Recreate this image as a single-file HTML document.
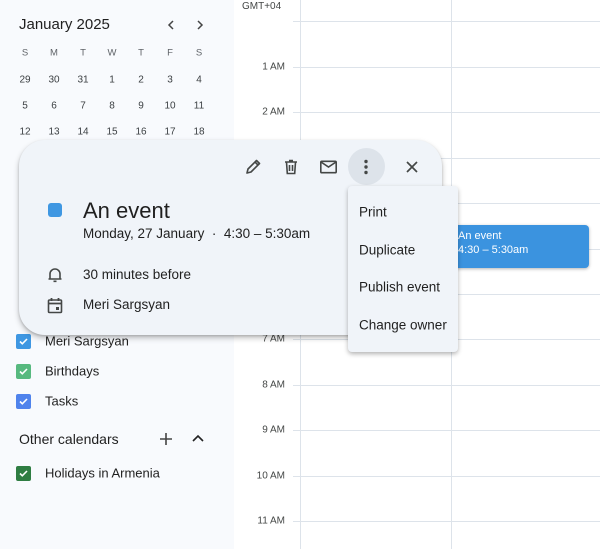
<!DOCTYPE html>
<html><head><style>
*{margin:0;padding:0;box-sizing:border-box}
body{width:600px;height:549px;overflow:hidden;position:relative;background:#fff;font-family:"Liberation Sans",Arial,sans-serif;color:#1f1f1f}
.a{position:absolute;white-space:nowrap}
#side{position:absolute;left:0;top:0;width:234px;height:549px;background:#f8fafd}
.hl{position:absolute;left:293px;right:0;height:1px;background:#dde3ea}
.vl{position:absolute;top:0;bottom:0;width:1px;background:#dde3ea}
.tl{position:absolute;right:315px;font-size:10px;color:#444746;transform:translateY(-50%)}
.d{position:absolute;width:20px;text-align:center;font-size:10px;color:#3c4043;transform:translate(-50%,-50%)}
.cb{position:absolute;left:16px;width:15px;height:15px;border-radius:2px}
.cb svg{position:absolute;left:1px;top:1px}
.ct{position:absolute;left:45px;font-size:13px;color:#1f1f1f;transform:translateY(-50%)}
.mi{position:absolute;left:359px;font-size:13.5px;color:#1f1f1f;transform:translateY(-50%)}
</style></head><body>
<div id="side"></div>
<div class="a" style="left:19px;top:16px;font-size:15px;color:#1f1f1f">January 2025</div>
<svg class="a" style="left:165px;top:19px" width="12" height="12" viewBox="0 0 12 12"><path d="M8 2 4 6l4 4" fill="none" stroke="#444" stroke-width="1.5"/></svg>
<svg class="a" style="left:194px;top:19px" width="12" height="12" viewBox="0 0 12 12"><path d="M4 2l4 4-4 4" fill="none" stroke="#444" stroke-width="1.5"/></svg>
<div id="days"></div>
<script>
var c=[25,54,83,112,141,170,199],h="";
var rows=[["S","M","T","W","T","F","S"],["29","30","31","1","2","3","4"],["5","6","7","8","9","10","11"],["12","13","14","15","16","17","18"]],ys=[53,80,106,132];
rows.forEach(function(r,i){r.forEach(function(t,j){h+='<div class="d" style="left:'+c[j]+'px;top:'+ys[i]+'px;'+(i==0?'font-size:9.5px;color:#5f6368':'')+'">'+t+'</div>'})});
document.getElementById('days').innerHTML=h;
</script>
<div class="hl" style="top:21px"></div>
<div class="vl" style="left:300px"></div>
<div class="vl" style="left:451px"></div>
<div class="a" style="left:242px;top:1px;font-size:10px;color:#444746">GMT+04</div>
<div id="hrs"></div>
<script>
var s="";for(var k=1;k<=11;k++){var y=Math.round(67+45.4*(k-1));s+='<div class="hl" style="top:'+y+'px"></div><div class="tl" style="top:'+y+'px">'+k+' AM</div>';}
document.getElementById('hrs').innerHTML=s;
</script>
<div class="a" style="left:453px;top:225px;width:136px;height:43px;background:#3b93df;border-radius:4px;box-shadow:0 1px 3px rgba(0,0,0,.3)"></div>
<div class="a" style="left:458px;top:229px;font-size:11px;color:#fff;line-height:14px">An event<br>4:30 – 5:30am</div>

<div class="cb" style="top:334px;background:#3f97e2"><svg width="13" height="13" viewBox="0 0 13 13"><path d="M3 6.5l2.3 2.3L10 4" fill="none" stroke="#fff" stroke-width="1.6"/></svg></div>
<div class="ct" style="top:341px">Meri Sargsyan</div>
<div class="cb" style="top:364px;background:#57b97f"><svg width="13" height="13" viewBox="0 0 13 13"><path d="M3 6.5l2.3 2.3L10 4" fill="none" stroke="#fff" stroke-width="1.6"/></svg></div>
<div class="ct" style="top:371px">Birthdays</div>
<div class="cb" style="top:394px;background:#4f83ec"><svg width="13" height="13" viewBox="0 0 13 13"><path d="M3 6.5l2.3 2.3L10 4" fill="none" stroke="#fff" stroke-width="1.6"/></svg></div>
<div class="ct" style="top:401px">Tasks</div>
<div class="a" style="left:19px;top:431px;font-size:14px;color:#1f1f1f">Other calendars</div>
<svg class="a" style="left:159px;top:432px" width="14" height="14" viewBox="0 0 14 14"><path d="M7 1v12M1 7h12" stroke="#444" stroke-width="1.6"/></svg>
<svg class="a" style="left:191px;top:433px" width="14" height="12" viewBox="0 0 14 12"><path d="M2 8l5-5 5 5" fill="none" stroke="#222" stroke-width="1.6"/></svg>
<div class="cb" style="top:466px;background:#2f7d42"><svg width="13" height="13" viewBox="0 0 13 13"><path d="M3 6.5l2.3 2.3L10 4" fill="none" stroke="#fff" stroke-width="1.6"/></svg></div>
<div class="ct" style="top:473px">Holidays in Armenia</div>

<div class="a" style="left:19px;top:140px;width:423px;height:195px;background:#f0f4f9;border-radius:26px;box-shadow:0 3px 6px rgba(0,0,0,.25),0 1px 2px rgba(0,0,0,.15)"></div>
<svg class="a" style="left:244px;top:158px" width="18" height="18" viewBox="0 0 18 18"><path d="M3 15l1-4L12.5 2.5l3 3L7 14z M11 4l3 3" fill="none" stroke="#444746" stroke-width="1.6" stroke-linejoin="round"/></svg>
<svg class="a" style="left:282px;top:158px" width="18" height="18" viewBox="0 0 18 18"><path d="M3 4h12M7 2.5h4M4.5 4l.8 11.5h7.4L13.5 4M7.5 7v6M10.5 7v6" fill="none" stroke="#444746" stroke-width="1.6"/></svg>
<svg class="a" style="left:319px;top:158px" width="19" height="18" viewBox="0 0 19 18"><rect x="1.8" y="3.3" width="15.4" height="11.4" rx="1" fill="none" stroke="#444746" stroke-width="1.6"/><path d="M2 4l7.5 5L17 4" fill="none" stroke="#444746" stroke-width="1.6"/></svg>
<div class="a" style="left:348px;top:148px;width:37px;height:37px;border-radius:50%;background:#dde3ea"></div>
<svg class="a" style="left:362px;top:158px" width="8" height="18" viewBox="0 0 8 18"><circle cx="4" cy="3.5" r="1.7" fill="#444746"/><circle cx="4" cy="9" r="1.7" fill="#444746"/><circle cx="4" cy="14.5" r="1.7" fill="#444746"/></svg>
<svg class="a" style="left:404px;top:159px" width="16" height="16" viewBox="0 0 16 16"><path d="M3 3l10 10M13 3L3 13" stroke="#444746" stroke-width="1.7"/></svg>
<div class="a" style="left:48px;top:203px;width:14px;height:14px;border-radius:3px;background:#3f97e2"></div>
<div class="a" style="left:83px;top:198px;font-size:22px;color:#1f1f1f">An event</div>
<div class="a" style="left:83px;top:226px;font-size:13.5px;color:#1f1f1f">Monday, 27 January &nbsp;·&nbsp; 4:30 – 5:30am</div>
<svg class="a" style="left:47px;top:266px" width="16" height="17" viewBox="0 0 16 17"><path d="M3 13V8a5 5 0 0 1 10 0v5M1.5 13h13M6.5 15.3h3" fill="none" stroke="#444746" stroke-width="1.6"/></svg>
<div class="a" style="left:83px;top:267px;font-size:13.5px">30 minutes before</div>
<svg class="a" style="left:47px;top:297px" width="16" height="17" viewBox="0 0 16 17"><rect x="1.5" y="3" width="13" height="12.5" rx="1" fill="none" stroke="#444746" stroke-width="1.6"/><path d="M1.5 6.5h13M4.5 1v3M11.5 1v3" stroke="#444746" stroke-width="1.8"/><rect x="9" y="10" width="3" height="3" fill="#444746"/></svg>
<div class="a" style="left:83px;top:297px;font-size:13.5px">Meri Sargsyan</div>

<div class="a" style="left:348px;top:186px;width:110px;height:166px;background:#f0f4f9;border-radius:4px;box-shadow:0 2px 5px rgba(0,0,0,.3)"></div>
<div class="mi" style="top:212px">Print</div>
<div class="mi" style="top:250px">Duplicate</div>
<div class="mi" style="top:287px">Publish event</div>
<div class="mi" style="top:325px">Change owner</div>
</body></html>
